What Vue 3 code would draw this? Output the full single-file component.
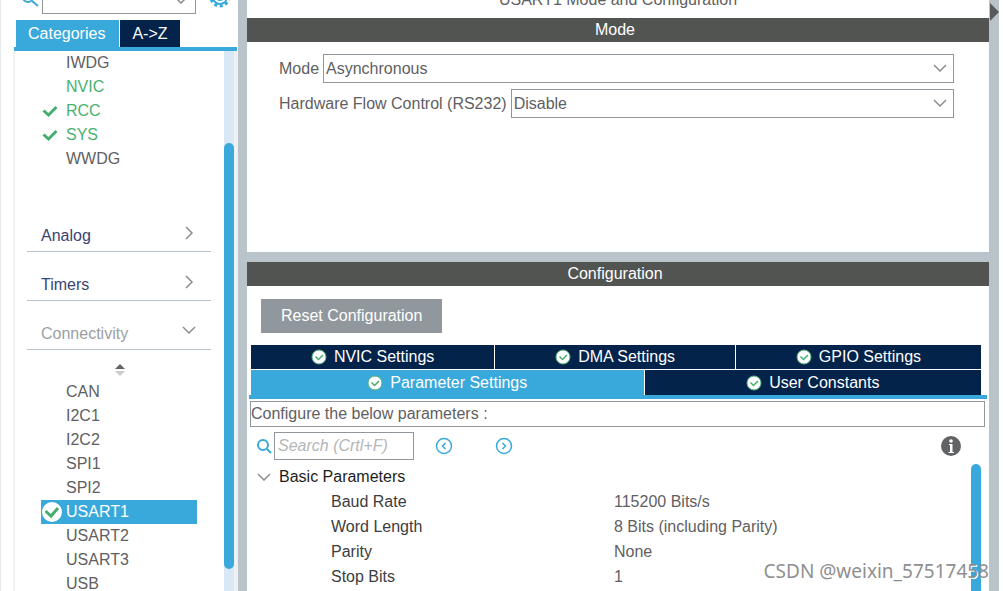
<template>
  <div class="app">
    <aside class="sidebar">
      <div class="finder">
        <svg class="finder-icon" viewBox="0 0 18 18" width="18" height="18">
          <circle cx="7" cy="7" r="5" />
          <path d="M11 11 L17 16" />
        </svg>
        <div class="finder-box">
          <select v-model="finder" aria-label="Find peripheral">
            <option value=""></option>
          </select>
          <svg class="chevron" viewBox="0 0 14 8" width="14" height="8">
            <path d="M1 1 L7 7 L13 1" />
          </svg>
        </div>
        <button class="gear-btn" aria-label="Settings">
          <svg viewBox="0 0 22 22" width="22" height="22">
            <circle class="gear-teeth" cx="11" cy="11" r="9" />
            <circle class="gear-ring" cx="11" cy="11" r="7" />
            <circle class="gear-ring" cx="11" cy="11" r="3" />
          </svg>
        </button>
      </div>

      <div class="side-tabs">
        <button :class="{ active: sideTab === 'cat' }" @click="sideTab = 'cat'">Categories</button>
        <button :class="{ active: sideTab === 'az' }" @click="sideTab = 'az'">A-&gt;Z</button>
      </div>

      <div class="side-body">
        <div class="side-list">
          <ul class="items">
            <li v-for="item in systemItems" :key="item.name">
              <button class="item" :class="{ enabled: item.enabled }">
                <span class="mark">
                  <svg v-if="item.checked" viewBox="0 0 16 13" width="16" height="13">
                    <path class="tick" d="M1.500 5.500 L6.500 10 L14.500 2" />
                  </svg>
                </span>
                {{ item.name }}
              </button>
            </li>
          </ul>

          <div class="sections">
            <button v-for="s in sections" :key="s.name" class="section" :class="{ open: s.open }">
              {{ s.name }}
              <svg v-if="s.open" class="chevron" viewBox="0 0 14 14" width="14" height="14">
                <path d="M1 2 L7 8 L13 2" />
              </svg>
              <svg v-else class="chevron" viewBox="0 0 14 16" width="14" height="16">
                <path d="M4 1 L10 7 L4 13" />
              </svg>
            </button>
          </div>

          <button class="sorter" aria-label="Sort">
            <svg viewBox="0 0 10 14" width="10" height="14">
              <path d="M0 6 L5 1 L10 6 Z" fill="#626466" />
              <path d="M0 8 L10 8 L5 13 Z" fill="#c9cbcc" />
            </svg>
          </button>

          <ul class="items">
            <li v-for="name in connectivity" :key="name">
              <button class="item" :class="{ selected: name === current }" @click="current = name">
                <span class="mark">
                  <svg v-if="name === current" viewBox="0 0 20 20" width="20" height="20">
                    <circle cx="10" cy="10" r="10" fill="#fff" />
                    <path class="tick" d="M3.500 9 L9 14 L16 6" />
                  </svg>
                </span>
                {{ name }}
              </button>
            </li>
          </ul>
        </div>
        <div class="track">
          <div class="thumb" :style="{ top: scroll.top + '%', height: scroll.size + '%' }"></div>
        </div>
      </div>
    </aside>

    <main class="main">
      <header class="title">USART1 Mode and Configuration</header>

      <section class="mode">
        <h2 class="bar">Mode</h2>
        <div class="mode-form">
          <div class="field">
            <label for="mode">Mode</label>
            <div class="select-box">
              <select id="mode" v-model="mode">
                <option>Asynchronous</option>
                <option>Synchronous</option>
                <option>Disable</option>
              </select>
              <svg class="chevron" viewBox="0 0 14 8" width="14" height="8">
                <path d="M1 1 L7 7 L13 1" />
              </svg>
            </div>
          </div>
          <div class="field">
            <label for="flow">Hardware Flow Control (RS232)</label>
            <div class="select-box">
              <select id="flow" v-model="flow">
                <option>Disable</option>
                <option>CTS Only</option>
                <option>RTS Only</option>
              </select>
              <svg class="chevron" viewBox="0 0 14 8" width="14" height="8">
                <path d="M1 1 L7 7 L13 1" />
              </svg>
            </div>
          </div>
        </div>
      </section>

      <section class="config">
        <h2 class="bar">Configuration</h2>
        <button class="reset">Reset Configuration</button>

        <div class="tabs">
          <div v-for="(row, i) in tabRows" :key="i" class="tab-row">
            <button
              v-for="t in row"
              :key="t"
              class="tab"
              :class="{ active: t === tab }"
              @click="tab = t"
            >
              <svg viewBox="0 0 16 16" width="16" height="16">
                <circle cx="8" cy="8" r="7" fill="#fff" stroke="#4fb277" stroke-width="1" />
                <path d="M4.500 7.500 L7.500 10.500 L12 6" fill="none" stroke="#45ad70" stroke-width="1.500" />
              </svg>
              {{ t }}
            </button>
          </div>
        </div>

        <div class="hint">Configure the below parameters :</div>

        <div class="search-row">
          <svg class="search-icon" viewBox="0 0 16 16" width="16" height="16">
            <circle cx="7" cy="7" r="5" />
            <path d="M11 11 L15 15" />
          </svg>
          <input v-model="search" type="text" placeholder="Search (Crtl+F)" aria-label="Search" />
          <button class="step" aria-label="Previous">
            <svg viewBox="0 0 18 18" width="18" height="18">
              <circle cx="9" cy="9" r="7.500" />
              <path d="M10.500 6 L7.500 9 L10.500 12" />
            </svg>
          </button>
          <button class="step" aria-label="Next">
            <svg viewBox="0 0 18 18" width="18" height="18">
              <circle cx="9" cy="9" r="7.500" />
              <path d="M7.500 6 L10.500 9 L7.500 12" />
            </svg>
          </button>
          <button class="info" aria-label="Information">
            <svg viewBox="0 0 20 20" width="20" height="20">
              <circle cx="10" cy="10" r="10" fill="#626365" />
              <circle cx="10" cy="5" r="1.800" fill="#fff" />
              <path d="M8 8 H11.500 V16 H13 V17 H7.500 V16 H9 V9 H8 Z" fill="#fff" />
            </svg>
          </button>
        </div>

        <div class="params">
          <div class="tree">
            <button class="group" @click="expanded = !expanded">
              <svg class="chevron" viewBox="0 0 14 8" width="14" height="8">
                <path d="M1 1 L7 7 L13 1" />
              </svg>
              Basic Parameters
            </button>
            <table v-if="expanded">
              <tbody>
                <tr v-for="p in params" :key="p.name">
                  <th scope="row">{{ p.name }}</th>
                  <td>{{ p.value }}</td>
                </tr>
              </tbody>
            </table>
          </div>
          <div class="params-thumb"></div>
        </div>
      </section>
    </main>

    <div class="splitter">
      <svg viewBox="0 0 9 18" width="9" height="18">
        <path d="M0 0 L9 9 L0 18 Z" fill="#58595b" />
      </svg>
    </div>

    <div class="watermark">CSDN @weixin_57517458</div>
  </div>
</template>

<script setup>
import { ref } from 'vue'

const finder = ref('')
const sideTab = ref('cat')
const current = ref('USART1')
const mode = ref('Asynchronous')
const flow = ref('Disable')
const tab = ref('Parameter Settings')
const search = ref('')
const expanded = ref(true)

const scroll = { top: 17, size: 79 }

const systemItems = [
  { name: 'IWDG' },
  { name: 'NVIC', enabled: true },
  { name: 'RCC', enabled: true, checked: true },
  { name: 'SYS', enabled: true, checked: true },
  { name: 'WWDG' },
]

const sections = [
  { name: 'Analog', open: false },
  { name: 'Timers', open: false },
  { name: 'Connectivity', open: true },
]

const connectivity = ['CAN', 'I2C1', 'I2C2', 'SPI1', 'SPI2', 'USART1', 'USART2', 'USART3', 'USB']

const tabRows = [
  ['NVIC Settings', 'DMA Settings', 'GPIO Settings'],
  ['Parameter Settings', 'User Constants'],
]

const params = [
  { name: 'Baud Rate', value: '115200 Bits/s' },
  { name: 'Word Length', value: '8 Bits (including Parity)' },
  { name: 'Parity', value: 'None' },
  { name: 'Stop Bits', value: '1' },
]
</script>

<style>
body {
  margin: 0;
  background: #fff;
}
</style>

<style scoped>
.app {
  position: relative;
  display: flex;
  height: 100vh;
  padding-right: 4px;
  box-sizing: border-box;
  overflow: hidden;
  font-family: "Liberation Sans", Arial, sans-serif;
  font-size: 16px;
  line-height: 24px;
  color: #5f6062;
}

button,
select,
input {
  font: inherit;
  color: inherit;
  margin: 0;
  padding: 0;
  border: none;
  border-radius: 0;
  background: none;
  box-sizing: border-box;
}

button {
  cursor: pointer;
}

svg {
  display: block;
  flex: none;
}

.chevron {
  fill: none;
  stroke: #8b8d8f;
  stroke-width: 1.5;
}

/* sidebar */
.sidebar {
  display: flex;
  flex-direction: column;
  flex: none;
  width: 238px;
  box-sizing: border-box;
  border-left: 1px solid #e6e8ea;
  padding-left: 12px;
}

.finder {
  display: flex;
  align-items: flex-end;
  height: 14px;
  padding-left: 8px;
}

.finder-icon {
  margin-bottom: 6px;
}

.finder-icon,
.search-icon {
  fill: none;
  stroke: #39a9dc;
  stroke-width: 2;
}

.finder-box {
  position: relative;
  width: 154px;
  margin-left: 3px;
}

.finder-box select {
  display: block;
  appearance: none;
  width: 100%;
  height: 29px;
  border: 1px solid #8f979d;
}

.finder-box .chevron {
  position: absolute;
  right: 8px;
  bottom: 10px;
  pointer-events: none;
}

.gear-btn {
  margin: 0 0 6px 13px;
}

.gear-teeth,
.gear-ring {
  fill: none;
  stroke: #39a9dc;
  stroke-width: 2;
}

.gear-teeth {
  stroke-width: 3;
  stroke-dasharray: 3 2.650;
}

.side-tabs {
  display: flex;
  gap: 1px;
  margin: 6px 1px 0 1px;
  padding-left: 2px;
  border-bottom: 4px solid #39a9dc;
}

.side-tabs button {
  height: 27px;
  padding: 0 12px;
  background: #03234b;
  color: #fff;
}

.side-tabs .active {
  padding: 0 14px 0 12px;
  background: #39a9dc;
}

.side-body {
  display: flex;
  flex: 1;
  min-height: 0;
  border-left: 2px solid #f0f1f3;
  border-right: 4px solid #eff0f2;
}

.side-list {
  flex: 1;
  overflow: hidden;
}

.items {
  list-style: none;
  margin: 0;
  padding: 0 27px 0 26px;
}

.item {
  display: flex;
  align-items: center;
  width: 100%;
  height: 24px;
}

.item.enabled {
  color: #49b170;
}

.item.selected {
  background: #39a9dc;
  color: #fff;
}

.mark {
  width: 25px;
  padding-left: 1px;
  box-sizing: border-box;
}

.tick {
  fill: none;
  stroke: #45ad70;
  stroke-width: 3;
}

.sections {
  margin: 32px 13px 0 12px;
}

.section {
  display: flex;
  align-items: center;
  justify-content: space-between;
  width: 100%;
  height: 49px;
  padding: 17px 15px 0 14px;
  border-bottom: 1px solid #b9c4ca;
  color: #3b4374;
}

.section .chevron {
  margin-bottom: 3px;
}

.section.open {
  color: #9b9fa3;
}

.sorter {
  display: block;
  margin: 13px auto 3px;
}

.track {
  position: relative;
  width: 10px;
  background: #d8e8f5;
}

.thumb {
  position: absolute;
  left: 0;
  width: 100%;
  border-radius: 5px;
  background: #39a9dc;
}

/* main area */
.main {
  display: flex;
  flex-direction: column;
  flex: 1;
  min-width: 0;
  border-left: 9px solid #b8c4ca;
}

.title {
  display: flex;
  align-items: flex-end;
  justify-content: center;
  height: 9px;
  padding-bottom: 9px;
  line-height: 18px;
}

.bar {
  margin: 0;
  height: 24px;
  padding-right: 6px;
  background: #525452;
  color: #fff;
  font-size: 16px;
  font-weight: normal;
  text-align: center;
}

.mode {
  height: 234px;
  flex: none;
  border-bottom: 10px solid #b8c4ca;
}

.mode-form {
  display: flex;
  flex-direction: column;
  gap: 6px;
  padding: 12px 35px 0 32px;
}

.field {
  display: flex;
  align-items: center;
  gap: 4px;
}

.select-box {
  position: relative;
  flex: 1;
}

.select-box select {
  display: block;
  appearance: none;
  width: 100%;
  height: 29px;
  padding-left: 2px;
  border: 1px solid #8f979d;
}

.select-box .chevron {
  position: absolute;
  right: 7px;
  top: 10px;
  pointer-events: none;
}

.config {
  display: flex;
  flex-direction: column;
  flex: 1;
  min-height: 0;
}

.reset {
  align-self: flex-start;
  height: 34px;
  margin: 13px 0 12px 14px;
  padding: 0 20px;
  background: #90989e;
  color: #fff;
}

.tabs {
  display: flex;
  flex-direction: column;
  gap: 1px;
  margin: 0 2px;
  border-bottom: 4px solid #39a9dc;
}

.tab-row {
  display: flex;
  gap: 1px;
  margin: 0 6px 0 2px;
}

.tab {
  display: flex;
  align-items: center;
  justify-content: center;
  gap: 7px;
  flex: 1 1 auto;
  height: 24px;
  background: #03234b;
  color: #fff;
}

.tab-row + .tab-row .tab {
  flex: 6 1 0;
  height: 25px;
}

.tab-row + .tab-row .tab.active {
  flex: 7 1 0;
}

.tab.active {
  background: #39a9dc;
}

.hint {
  margin: 2px 4px 0 3px;
  border: 1px solid #8f979d;
}

.search-row {
  display: flex;
  align-items: center;
  margin-top: 5px;
  padding: 0 28px 0 9px;
}

.search-row input {
  width: 140px;
  height: 28px;
  margin-left: 2px;
  padding: 0 3px;
  border: 1px solid #8f979d;
}

.search-row input::placeholder {
  color: #b4b6b8;
  font-style: italic;
  opacity: 1;
}

.step {
  margin-left: 21px;
}

.step + .step {
  margin-left: 42px;
}

.step svg {
  fill: none;
  stroke: #39a9dc;
  stroke-width: 1.5;
}

.info {
  margin-left: auto;
}

.params {
  display: flex;
  flex: 1;
  min-height: 0;
  padding: 4px 8px 0 10px;
}

.tree {
  flex: 1;
  overflow: hidden;
}

.group {
  display: flex;
  align-items: center;
  gap: 8px;
  height: 25px;
  color: #1e1e20;
}

table {
  width: 100%;
  border-collapse: collapse;
  table-layout: fixed;
}

th,
td {
  height: 25px;
  padding: 0;
  font-weight: normal;
  text-align: left;
}

th {
  padding-left: 74px;
  color: #3c3d40;
}

.params-thumb {
  width: 10px;
  border-radius: 5px 5px 0 0;
  background: #39a9dc;
}

.splitter {
  width: 10px;
  padding: 3px 0 0 1px;
  box-sizing: border-box;
  background: #b8c4ca;
}

.watermark {
  position: absolute;
  right: 14px;
  bottom: 8px;
  font-family: "Noto Sans", sans-serif;
  font-size: 19px;
  color: #8e8f91;
  text-shadow: 1px 1px 0 #fff;
}
</style>
